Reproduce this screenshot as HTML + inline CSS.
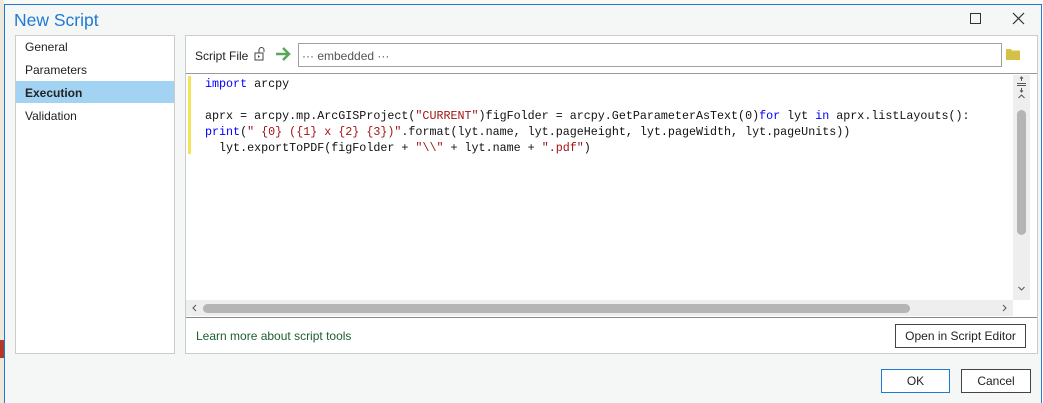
<!DOCTYPE html>
<html><head><style>
*{margin:0;padding:0;box-sizing:border-box}
body{width:1043px;height:403px;overflow:hidden;background:#fff;font-family:"Liberation Sans",sans-serif;font-size:12px;color:#222;position:relative}
.abs{position:absolute}
.code{font-family:"Liberation Mono",monospace;font-size:11.7px;white-space:pre;color:#111;line-height:16px}
.k{color:#00f}.s{color:#a31515}
</style></head><body>
<div class="abs" style="left:0;top:0;width:1043px;height:5px;background:#f8f8f4;border-bottom:1px solid #ddd"></div>
<div class="abs" style="left:0;top:0;width:4px;height:403px;background:#ede9dc"></div>
<div class="abs" style="left:0;top:340px;width:4px;height:18px;background:#b03a2a"></div>
<div class="abs" style="left:4px;top:4px;width:1038px;height:399px;background:#f5f6f6;border:1px solid #1e7ad4;border-bottom:none"></div>
<div class="abs" style="left:14px;top:10px;font-size:17.5px;color:#1e7ad4">New Script</div>
<div class="abs" style="left:970px;top:13px;width:11px;height:11px;border:1px solid #333"></div>
<svg class="abs" style="left:1012px;top:12px" width="13" height="13"><path d="M1 1L12 12M12 1L1 12" stroke="#333" stroke-width="1.2"/></svg>
<div class="abs" style="left:15px;top:35px;width:160px;height:319px;background:#fff;border:1px solid #ccc"></div>
<div class="abs" style="left:25px;top:40px;font-size:12px">General</div>
<div class="abs" style="left:25px;top:63px">Parameters</div>
<div class="abs" style="left:16px;top:81px;width:158px;height:22px;background:#a3d3f2"></div>
<div class="abs" style="left:25px;top:86px;font-weight:bold">Execution</div>
<div class="abs" style="left:25px;top:109px">Validation</div>
<div class="abs" style="left:185px;top:35px;width:853px;height:319px;background:#fff;border:1px solid #ccc"></div>
<div class="abs" style="left:195px;top:49px">Script File</div>
<svg class="abs" style="left:254px;top:46px" width="16" height="16"><rect x="1" y="7" width="8" height="7" fill="none" stroke="#444"/><path d="M5 7V4a2.5 2.5 0 0 1 5 0v2" fill="none" stroke="#444"/><path d="M4 9l2 1.5-2 1.5z" fill="#444"/></svg>
<svg class="abs" style="left:274px;top:46px" width="18" height="16"><path d="M2 8H15M9 2l6 6-6 6" fill="none" stroke="#5aa65a" stroke-width="2.5"/></svg>
<div class="abs" style="left:298px;top:43px;width:704px;height:24px;border:1px solid #a0a0a0;background:#fff"></div>
<div class="abs" style="left:302px;top:49px;color:#555">··· embedded ···</div>
<svg class="abs" style="left:1005px;top:47px" width="16" height="14"><path d="M1 2h5l1 1.5h8V13H1z" fill="#d8c34a"/><rect x="1" y="5" width="14" height="8" fill="#d4c047"/></svg>
<div class="abs" style="left:186px;top:73px;width:851px;height:1px;background:#999"></div>
<div class="abs" style="left:188px;top:76px;width:3px;height:78px;background:#f5e35c"></div>
<div class="abs code" style="left:205px;top:76px"><span class="k">import</span> arcpy

aprx = arcpy.mp.ArcGISProject(<span class="s">"CURRENT"</span>)figFolder = arcpy.GetParameterAsText(0)<span class="k">for</span> lyt <span class="k">in</span> aprx.listLayouts():
<span class="k">print</span>(<span class="s">" {0} ({1} x {2} {3})"</span>.format(lyt.name, lyt.pageHeight, lyt.pageWidth, lyt.pageUnits))
  lyt.exportToPDF(figFolder + <span class="s">"\\"</span> + lyt.name + <span class="s">".pdf"</span>)</div>
<div class="abs" style="left:1013px;top:75px;width:17px;height:225px;background:#eee"></div>
<svg class="abs" style="left:1013px;top:75px" width="17" height="225"><path d="M4 8.5h9M4 10.5h9M8.5 2v4M7 3.5l1.5-1.5 1.5 1.5M8.5 13v4M7 15.5l1.5 1.5 1.5-1.5" stroke="#555" fill="none"/><path d="M5.5 23l3-3 3 3" stroke="#555" fill="none"/><path d="M5.5 212l3 3 3-3" stroke="#555" fill="none"/></svg>
<div class="abs" style="left:1017px;top:110px;width:9px;height:125px;background:#b5b5b5;border-radius:5px"></div>
<div class="abs" style="left:186px;top:300px;width:827px;height:16px;background:#eee"></div>
<svg class="abs" style="left:186px;top:300px" width="827" height="16"><path d="M10 5l-3 3 3 3M817 5l3 3-3 3" stroke="#555" fill="none"/></svg>
<div class="abs" style="left:203px;top:304px;width:707px;height:9px;background:#b5b5b5;border-radius:5px"></div>
<div class="abs" style="left:186px;top:317px;width:851px;height:1px;background:#888"></div>
<div class="abs" style="left:196px;top:329px;color:#1d5f2f">Learn more about script tools</div>
<div class="abs" style="left:895px;top:324px;width:131px;height:24px;border:1px solid #444;background:#fff;text-align:center;line-height:22px">Open in Script Editor</div>
<div class="abs" style="left:881px;top:369px;width:69px;height:24px;border:1px solid #1e7ad4;background:#fff;text-align:center;line-height:22px">OK</div>
<div class="abs" style="left:961px;top:369px;width:70px;height:24px;border:1px solid #444;background:#fff;text-align:center;line-height:22px">Cancel</div>
</body></html>
